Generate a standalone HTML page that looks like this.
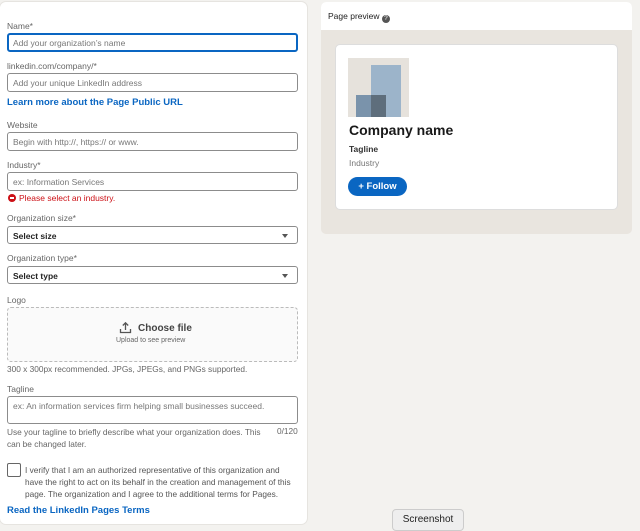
<!DOCTYPE html>
<html><head><meta charset="utf-8"><style>
*{box-sizing:border-box;margin:0;padding:0}
body{width:640px;height:529px;background:#f3f2ef;font-family:"Liberation Sans",sans-serif;position:relative;overflow:hidden;color:#666}
.a{position:absolute}
.lp{left:0;top:2px;width:307px;height:522px;background:#fff;border-radius:6px;box-shadow:0 0 0 1px #e6e4e0}
.lbl{font-size:8.5px;color:#666;left:7px}
.inp{left:7px;width:291px;height:19px;border:1px solid #8c8c8c;border-radius:3px;font-size:8.5px;color:#777;padding:4px 5px;background:#fff}
.sel{left:7px;width:291px;height:18px;border:1px solid #8c8c8c;border-radius:3px;font-size:8.5px;color:#222;font-weight:bold;padding:3.5px 5px;background:#fff}
.sel:after{content:"";position:absolute;right:9px;top:7px;border:3.5px solid transparent;border-top:4px solid #555}
.lnk{left:7px;font-size:9.5px;font-weight:bold;color:#0a66c2}
.sm{font-size:8.3px;color:#666;left:7px}
</style></head><body>
<div class="a lp"></div>
<div class="a lbl" style="top:21px">Name*</div>
<div class="a inp" style="top:33px;border:2px solid #0a66c2;padding:3px 4px">Add your organization’s name</div>
<div class="a lbl" style="top:61px">linkedin.com/company/*</div>
<div class="a inp" style="top:73px">Add your unique LinkedIn address</div>
<div class="a lnk" style="top:97px">Learn more about the Page Public URL</div>
<div class="a lbl" style="top:120px">Website</div>
<div class="a inp" style="top:132px">Begin with http://, https:// or www.</div>
<div class="a lbl" style="top:160px">Industry*</div>
<div class="a inp" style="top:172px">ex: Information Services</div>
<div class="a" style="left:8px;top:194px;width:8px;height:8px;border-radius:50%;background:#cc1016"><div style="position:absolute;left:2px;top:3.3px;width:4px;height:1.4px;background:#fff"></div></div>
<div class="a" style="left:19px;top:193px;font-size:8.5px;color:#cc1016">Please select an industry.</div>
<div class="a lbl" style="top:213px">Organization size*</div>
<div class="a sel" style="top:226px">Select size</div>
<div class="a lbl" style="top:253px">Organization type*</div>
<div class="a sel" style="top:266px">Select type</div>
<div class="a lbl" style="top:295px">Logo</div>
<div class="a" style="left:7px;top:307px;width:291px;height:55px;border:1px dashed #bbb;border-radius:4px;background:#fafafa"></div>
<svg class="a" style="left:119px;top:321px" width="13" height="13" viewBox="0 0 13 13"><path d="M6.5 9V2M3.8 4.5L6.5 1.8 9.2 4.5M1.5 8v3.5h10V8" fill="none" stroke="#555" stroke-width="1.3"/></svg>
<div class="a" style="left:138px;top:323px;font-size:10px;color:#444;font-weight:bold">Choose file</div>
<div class="a" style="left:116px;top:337px;font-size:7px;color:#666">Upload to see preview</div>
<div class="a sm" style="top:364px">300 x 300px recommended. JPGs, JPEGs, and PNGs supported.</div>
<div class="a lbl" style="top:384px">Tagline</div>
<div class="a inp" style="top:396px;height:28px">ex: An information services firm helping small businesses succeed.</div>
<div class="a sm" style="top:426px;line-height:12px;width:265px">Use your tagline to briefly describe what your organization does. This can be changed later.</div>
<div class="a sm" style="top:426px;left:277px">0/120</div>
<div class="a" style="left:7px;top:463px;width:14px;height:14px;border:1px solid #666;border-radius:2px"></div>
<div class="a" style="left:25px;top:464px;font-size:8.3px;line-height:12px;color:#555;width:270px">I verify that I am an authorized representative of this organization and have the right to act on its behalf in the creation and management of this page. The organization and I agree to the additional terms for Pages.</div>
<div class="a lnk" style="top:505px">Read the LinkedIn Pages Terms</div>

<div class="a" style="left:321px;top:2px;width:311px;height:232px;background:#e9e5df;border-radius:5px;overflow:hidden">
<div style="height:28px;background:#fff;font-size:8.5px;color:#222;padding:9px 7px">Page preview <span style="display:inline-block;width:8px;height:8px;border-radius:50%;background:#555;color:#fff;font-size:6.5px;text-align:center;line-height:8px;vertical-align:-1px">?</span></div>
</div>
<div class="a" style="left:335px;top:44px;width:283px;height:166px;background:#fff;border-radius:5px;border:1px solid #ddd"></div>
<div class="a" style="left:348px;top:58px;width:61px;height:59px;background:#e6e2dc"></div>
<div class="a" style="left:371px;top:65px;width:30px;height:52px;background:#9cb4ca"></div>
<div class="a" style="left:356px;top:95px;width:30px;height:22px;background:#7a93ab"></div>
<div class="a" style="left:371px;top:95px;width:15px;height:22px;background:#5e6e7c"></div>
<div class="a" style="left:349px;top:122px;font-size:14px;color:#191919;font-weight:bold">Company name</div>
<div class="a" style="left:349px;top:144px;font-size:8.5px;color:#333;font-weight:bold">Tagline</div>
<div class="a" style="left:349px;top:158px;font-size:8.5px;color:#777">Industry</div>
<div class="a" style="left:348px;top:177px;width:59px;height:19px;border-radius:10px;background:#0a66c2;color:#fff;font-size:9.5px;font-weight:bold;text-align:center;line-height:19px">+ Follow</div>
<div class="a" style="left:392px;top:509px;width:72px;height:22px;background:#eee;border:1px solid #ccc;border-radius:4px;font-size:10px;color:#222;text-align:center;line-height:20px">Screenshot</div>
</body></html>
